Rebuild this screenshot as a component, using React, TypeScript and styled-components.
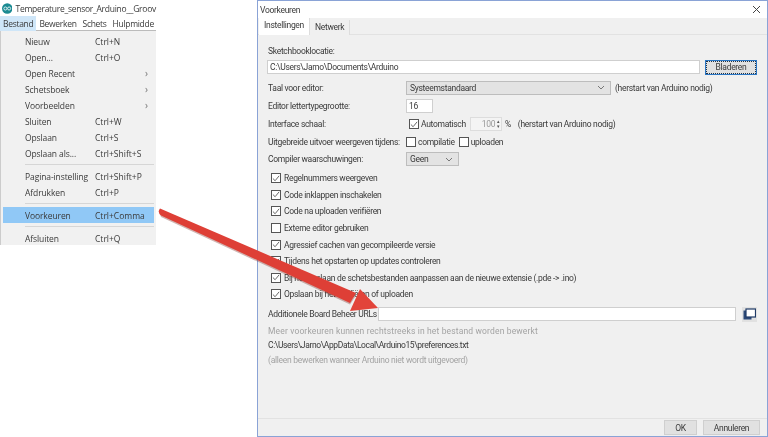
import styled, { createGlobalStyle } from "styled-components";

const GlobalStyle = createGlobalStyle`
  html, body {
    margin: 0;
    padding: 0;
    background: #fff;
  }
  * {
    box-sizing: border-box;
  }
`;

const menuItems = [
  { label: "Nieuw", keys: "Ctrl+N" },
  { label: "Open...", keys: "Ctrl+O" },
  { label: "Open Recent", arrow: true },
  { label: "Schetsboek", arrow: true },
  { label: "Voorbeelden", arrow: true },
  { label: "Sluiten", keys: "Ctrl+W" },
  { label: "Opslaan", keys: "Ctrl+S" },
  { label: "Opslaan als...", keys: "Ctrl+Shift+S" },
  { sep: true },
  { label: "Pagina-instelling", keys: "Ctrl+Shift+P" },
  { label: "Afdrukken", keys: "Ctrl+P" },
  { sep: true },
  { label: "Voorkeuren", keys: "Ctrl+Comma", active: true },
  { sep: true },
  { label: "Afsluiten", keys: "Ctrl+Q" },
];

const options = [
  { label: "Regelnummers weergeven", checked: true },
  { label: "Code inklappen inschakelen", checked: true },
  { label: "Code na uploaden verifiëren", checked: true },
  { label: "Externe editor gebruiken", checked: false },
  { label: "Agressief cachen van gecompileerde versie", checked: true },
  { label: "Tijdens het opstarten op updates controleren", checked: true },
  { label: "Bij het opslaan de schetsbestanden aanpassen aan de nieuwe extensie (.pde -> .ino)", checked: true },
  { label: "Opslaan bij het verifiëren of uploaden", checked: true },
];

const Check = ({ checked }: { checked: boolean }) => (
  <CheckBox>
    {checked && (
      <svg width="9" height="9" viewBox="0 0 9 9">
        <path d="M1 4.5 L3.5 7 L8 1.5" fill="none" stroke="#555" strokeWidth="1" />
      </svg>
    )}
  </CheckBox>
);

const Chevron = () => (
  <svg width="8" height="5" viewBox="0 0 8 5">
    <path d="M1 1 L4 4 L7 1" fill="none" stroke="#777" strokeWidth="1" />
  </svg>
);

const App = () => {
  return (
    <Page>
      <GlobalStyle />
      <IdeWindow>
        <IdeTitle>
          <svg width="13" height="13" viewBox="0 0 13 13">
            <circle cx="6.5" cy="6.5" r="6.5" fill="#1a8a92" />
            <circle cx="4.2" cy="6.5" r="1.9" fill="none" stroke="#fff" strokeWidth="1" />
            <circle cx="8.8" cy="6.5" r="1.9" fill="none" stroke="#fff" strokeWidth="1" />
          </svg>
          <IdeTitleText>Temperature_sensor_Arduino__Groov</IdeTitleText>
        </IdeTitle>
        <MenuBar>
          <MenuBarItem $open>Bestand</MenuBarItem>
          <MenuBarItem>Bewerken</MenuBarItem>
          <MenuBarItem>Schets</MenuBarItem>
          <MenuBarItem>Hulpmidde</MenuBarItem>
        </MenuBar>
        <Menu>
          {menuItems.map((item, i) =>
            item.sep ? (
              <MenuSep key={i} />
            ) : (
              <MenuRow key={i} $active={item.active}>
                <MenuLabel>{item.label}</MenuLabel>
                <MenuKeys>{item.keys}</MenuKeys>
                {item.arrow && <MenuArrow>›</MenuArrow>}
              </MenuRow>
            )
          )}
        </Menu>
      </IdeWindow>

      <Dialog>
        <DialogTitle>
          <span>Voorkeuren</span>
          <svg width="9" height="9" viewBox="0 0 9 9">
            <path d="M1 1 L8 8 M8 1 L1 8" stroke="#444" strokeWidth="1" />
          </svg>
        </DialogTitle>
        <TabBar>
          <Tab $active>Instellingen</Tab>
          <Tab>Netwerk</Tab>
        </TabBar>
        <Content>
          <PathLabel>Sketchbooklocatie:</PathLabel>
          <PathRow>
            <TextField $grow>C:\Users\Jarno\Documents\Arduino</TextField>
            <BrowseButton>Bladeren</BrowseButton>
          </PathRow>

          <FormRow $height={19}>
            <FormLabel>Taal voor editor:</FormLabel>
            <Select $width={205}>
              Systeemstandaard
              <Chevron />
            </Select>
            <Note>(herstart van Arduino nodig)</Note>
          </FormRow>
          <FormRow $height={18}>
            <FormLabel>Editor lettertypegrootte:</FormLabel>
            <TextField $width={27}>16</TextField>
          </FormRow>
          <FormRow $height={18}>
            <FormLabel>Interface schaal:</FormLabel>
            <ScaleCheck>
              <Check checked />
            </ScaleCheck>
            <CheckText>Automatisch</CheckText>
            <Spinner>
              100
              <SpinArrows>
                <span>▴</span>
                <span>▾</span>
              </SpinArrows>
            </Spinner>
            <Percent>%</Percent>
            <Note>(herstart van Arduino nodig)</Note>
          </FormRow>
          <FormRow $height={17}>
            <FormLabel>Uitgebreide uitvoer weergeven tijdens:</FormLabel>
            <Check checked={false} />
            <CheckText>compilatie</CheckText>
            <Check checked={false} />
            <CheckText>uploaden</CheckText>
          </FormRow>
          <FormRow $height={18}>
            <FormLabel>Compiler waarschuwingen:</FormLabel>
            <Select $width={53}>
              Geen
              <Chevron />
            </Select>
          </FormRow>

          <OptionList>
            {options.map((o) => (
              <OptionRow key={o.label}>
                <Check checked={o.checked} />
                <span>{o.label}</span>
              </OptionRow>
            ))}
          </OptionList>

          <UrlRow>
            <UrlLabel>Additionele Board Beheer URLs</UrlLabel>
            <TextField $grow />
            <WindowButton>
              <svg width="13" height="12" viewBox="0 0 13 12">
                <rect x="0.5" y="2.5" width="8" height="9" fill="#2d4a78" />
                <rect x="3" y="1" width="9.5" height="8" fill="#fff" stroke="#1f3a66" strokeWidth="1.2" />
              </svg>
            </WindowButton>
          </UrlRow>
          <InfoBlock>
            <Hint $spacing={0.15}>Meer voorkeuren kunnen rechtstreeks in het bestand worden bewerkt</Hint>
            <PrefPath $spacing={-0.38}>C:\Users\Jarno\AppData\Local\Arduino15\preferences.txt</PrefPath>
            <Hint $spacing={-0.27}>(alleen bewerken wanneer Arduino niet wordt uitgevoerd)</Hint>
          </InfoBlock>
        </Content>
        <Footer>
          <FooterButton $width={33}>OK</FooterButton>
          <FooterButton $width={57}>Annuleren</FooterButton>
        </Footer>
      </Dialog>

      <ArrowLayer width="768" height="437" viewBox="0 0 768 437">
        <g fill="#7a2a22" opacity="0.35" transform="translate(0 1.5)">
          <path d="M159 209 L161 215.5 L350 303 L356 294 Z" />
        </g>
        <path d="M160 208.5 Q157 212 161 215.5 L350 303 L356 293 Z" fill="#de3f36" />
        <path d="M360 289 L378 308 L350 311 Z" fill="#e2443a" />
      </ArrowLayer>
    </Page>
  );
};

export default App;

const Page = styled.div`
  position: relative;
  width: 768px;
  height: 437px;
  overflow: hidden;
  display: flex;
  align-items: flex-start;
  justify-content: space-between;
  background: #fff;
  font-family: "Open Sans", "Noto Sans", sans-serif;
  font-size: 8.5px;
  color: #3a3a3a;
  filter: blur(0.25px);
`;

const IdeWindow = styled.div`
  width: 156px;
`;

const IdeTitle = styled.div`
  display: flex;
  align-items: center;
  gap: 3px;
  height: 16px;
  padding-left: 2px;
`;

const IdeTitleText = styled.span`
  white-space: nowrap;
  letter-spacing: -0.27px;
`;

const MenuBar = styled.div`
  display: flex;
  height: 15px;
  align-items: center;
  background: #fff;
  border-bottom: 1px solid #bbb;
`;

const MenuBarItem = styled.div<{ $open?: boolean }>`
  height: 15px;
  line-height: 15px;
  padding: 0 3px;
  white-space: nowrap;
  letter-spacing: -0.3px;
  background: ${(p) => (p.$open ? "#cfe6f8" : "transparent")};
`;

const Menu = styled.div`
  height: 214px;
  padding: 2px 2px 0 2px;
  background: #f1f1f1;
  border-left: 1px solid #ccc;
`;

const MenuRow = styled.div<{ $active?: boolean }>`
  display: flex;
  align-items: center;
  height: 16px;
  padding-left: 22px;
  background: ${(p) => (p.$active ? "#90c8f6" : "transparent")};
`;

const MenuLabel = styled.span`
  width: 70px;
  white-space: nowrap;
  letter-spacing: -0.1px;
`;

const MenuKeys = styled.span`
  flex: 1;
  white-space: nowrap;
`;

const MenuArrow = styled.span`
  width: 9px;
  font-size: 10px;
  color: #777;
`;

const MenuSep = styled.div`
  height: 1px;
  margin: 3px 0 3px 22px;
  background: #d6d6d6;
`;

const Dialog = styled.div`
  display: flex;
  flex-direction: column;
  width: 511px;
  height: 437px;
  font-family: Roboto, "Open Sans", sans-serif;
  font-size: 8.5px;
  letter-spacing: -0.3px;
  background: #f0f0f0;
  border: 1px solid #8aa3d6;
`;

const DialogTitle = styled.div`
  display: flex;
  align-items: center;
  justify-content: space-between;
  height: 17px;
  padding: 0 6px 0 2px;
  background: #fff;
`;

const TabBar = styled.div`
  display: flex;
  height: 17px;
  padding-left: 1px;
  background: #f0f0f0;
  border-bottom: 1px solid #e2e2e2;
`;

const Tab = styled.div<{ $active?: boolean }>`
  height: ${(p) => (p.$active ? "17px" : "15px")};
  margin-top: ${(p) => (p.$active ? "0" : "2px")};
  padding: 0 5px;
  line-height: 15px;
  background: ${(p) => (p.$active ? "#fff" : "#f0f0f0")};
  border-right: 1px solid #ddd;
`;

const Content = styled.div`
  flex: 1;
  padding: 9px 10px 0 9px;
`;

const PathLabel = styled.div`
  height: 15px;
  line-height: 14px;
  padding-left: 1px;
`;

const PathRow = styled.div`
  display: flex;
  align-items: center;
  gap: 5px;
  height: 16px;
  margin-bottom: 3px;
`;

const TextField = styled.div<{ $grow?: boolean; $width?: number }>`
  ${(p) => (p.$grow ? "flex: 1;" : `width: ${p.$width}px;`)}
  height: 14px;
  line-height: 12px;
  padding-left: 2px;
  background: #fff;
  border: 1px solid #cfcfcf;
  white-space: nowrap;
`;

const BrowseButton = styled.div`
  width: 52px;
  height: 15px;
  line-height: 12px;
  text-align: center;
  background: #e1e1e1;
  border: 1px solid #2a76c4;
  outline: 1px dotted #234;
  outline-offset: -2px;
`;

const FormRow = styled.div<{ $height: number }>`
  display: flex;
  align-items: center;
  height: ${(p) => p.$height}px;
  padding-left: 1px;
  white-space: nowrap;
`;

const FormLabel = styled.span`
  flex: none;
  width: 138px;
`;

const Select = styled.div<{ $width: number }>`
  display: flex;
  align-items: center;
  justify-content: space-between;
  width: ${(p) => p.$width}px;
  height: 14px;
  padding: 0 5px 0 3px;
  background: #e3e3e3;
  border: 1px solid #bdbdbd;
`;

const Note = styled.span`
  margin-left: 4px;
  white-space: nowrap;
`;

const ScaleCheck = styled.span`
  display: inline-flex;
  margin-left: 3px;
`;

const CheckBox = styled.span`
  display: inline-flex;
  align-items: center;
  justify-content: center;
  flex: none;
  width: 10px;
  height: 10px;
  background: #fff;
  border: 1px solid #555;
`;

const CheckText = styled.span`
  margin: 0 4px 0 2px;
`;

const Spinner = styled.div`
  display: flex;
  align-items: center;
  justify-content: flex-end;
  gap: 2px;
  width: 32px;
  height: 14px;
  padding-right: 1px;
  color: #999;
  background: #f4f4f4;
  border: 1px solid #ddd;
`;

const Percent = styled.span`
  margin-left: 3px;
  margin-right: 3px;
`;

const SpinArrows = styled.span`
  display: flex;
  flex-direction: column;
  font-size: 5px;
  line-height: 5px;
  color: #555;
`;

const OptionList = styled.div`
  display: flex;
  flex-direction: column;
  margin-top: 2px;
`;

const OptionRow = styled.div`
  display: flex;
  align-items: center;
  gap: 3px;
  height: 16.6px;
  padding-left: 4px;
  white-space: nowrap;
`;

const UrlRow = styled.div`
  display: flex;
  align-items: center;
  height: 15px;
  margin-top: 4px;
  padding-left: 1px;
  white-space: nowrap;
`;

const UrlLabel = styled.span`
  flex: none;
  width: 110px;
`;

const WindowButton = styled.div`
  display: flex;
  align-items: center;
  justify-content: center;
  width: 15px;
  height: 15px;
  margin-left: 6px;
  background: #e1e1e1;
`;

const InfoBlock = styled.div`
  margin-top: 2px;
`;

const Hint = styled.div<{ $spacing: number }>`
  height: 14.5px;
  line-height: 14.5px;
  padding-left: 1px;
  color: #a3a3a3;
  white-space: nowrap;
  letter-spacing: ${(p) => p.$spacing}px;
`;

const PrefPath = styled(Hint)`
  color: #3a3a3a;
`;

const Footer = styled.div`
  display: flex;
  justify-content: flex-end;
  align-items: center;
  gap: 6px;
  height: 18px;
  padding-right: 7px;
  border-top: 1px solid #e2e2e2;
`;

const FooterButton = styled.div<{ $width: number }>`
  width: ${(p) => p.$width}px;
  height: 15px;
  line-height: 14px;
  text-align: center;
  background: #e1e1e1;
  border: 1px solid #cfcfcf;
`;

const ArrowLayer = styled.svg`
  position: absolute;
  top: 0;
  left: 0;
  pointer-events: none;
`;
